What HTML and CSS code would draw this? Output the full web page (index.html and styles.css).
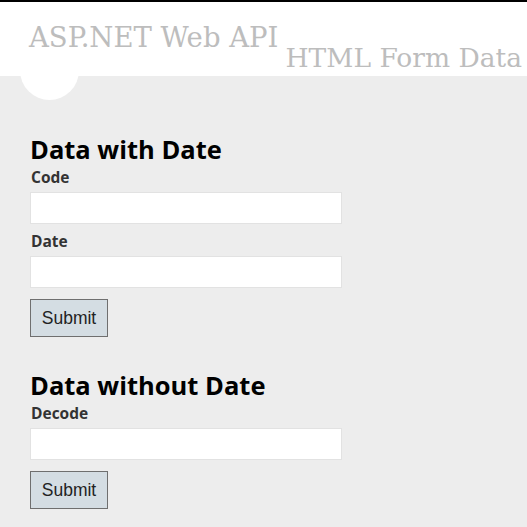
FILE: index.html
```html
<!DOCTYPE html>
<html>
<head>
<meta charset="utf-8">
<link rel="stylesheet" href="styles.css">
</head>
<body>
<header class="site-header">
  <div class="titles">
    <span class="title-main">ASP.NET Web API</span>
    <span class="title-sub">HTML Form Data</span>
  </div>
  <div class="circle"></div>
</header>
<main class="content">
  <form class="data-form">
    <h2 class="form-title">Data with Date</h2>
    <label class="field-label">Code</label>
    <input class="field-input" type="text">
    <label class="field-label">Date</label>
    <input class="field-input" type="text">
    <button class="submit-btn" type="button">Submit</button>
  </form>
  <form class="data-form second">
    <h2 class="form-title">Data without Date</h2>
    <label class="field-label">Decode</label>
    <input class="field-input" type="text">
    <button class="submit-btn" type="button">Submit</button>
  </form>
</main>
</body>
</html>
```
FILE: styles.css
```css
html, body {
  margin: 0;
  padding: 0;
  background: #ededed;
  height: 100%;
}
body {
  font-family: "Open Sans", "Noto Sans", sans-serif;
  border-top: 2px solid #000;
}
.site-header {
  position: relative;
  background: #fff;
  height: 74px;
}
.titles {
  display: flex;
  align-items: flex-start;
  padding-left: 29px;
  font-family: "DejaVu Serif", serif;
  color: #bdbdbd;
  position: relative;
  z-index: 2;
  white-space: nowrap;
}
.title-main {
  font-size: 27.5px;
  line-height: 30px;
  margin-top: 20px;
}
.title-sub {
  font-size: 26.5px;
  line-height: 30px;
  margin-top: 41px;
  margin-left: 7px;
}
.circle {
  position: absolute;
  left: 20px;
  top: 39px;
  width: 59px;
  height: 59px;
  border-radius: 50%;
  background: #fff;
  z-index: 1;
}
.content {
  padding: 58px 0 0 30px;
}
.data-form {
  display: flex;
  flex-direction: column;
  align-items: flex-start;
  margin: 0;
}
.data-form.second {
  margin-top: 33px;
}
.form-title {
  margin: 0 0 3px;
  font-size: 25.5px;
  line-height: 30px;
  font-weight: 700;
  color: #000;
}
.field-label {
  font-size: 15.5px;
  line-height: 20px;
  font-weight: 700;
  color: #333;
  margin: 0 0 5px 1px;
}
.field-input {
  box-sizing: border-box;
  width: 312px;
  height: 32px;
  margin: 0 0 7px;
  border: 1px solid #e2e2e2;
  background: #fff;
  outline: none;
}
.submit-btn {
  box-sizing: border-box;
  margin-top: 4px;
  width: 78px;
  height: 38px;
  background: #d4dde3;
  border: 1px solid #6f6f6f;
  border-radius: 0;
  font-family: "Liberation Sans", Arial, sans-serif;
  font-size: 17.5px;
  color: #222;
  padding: 0;
}
```
